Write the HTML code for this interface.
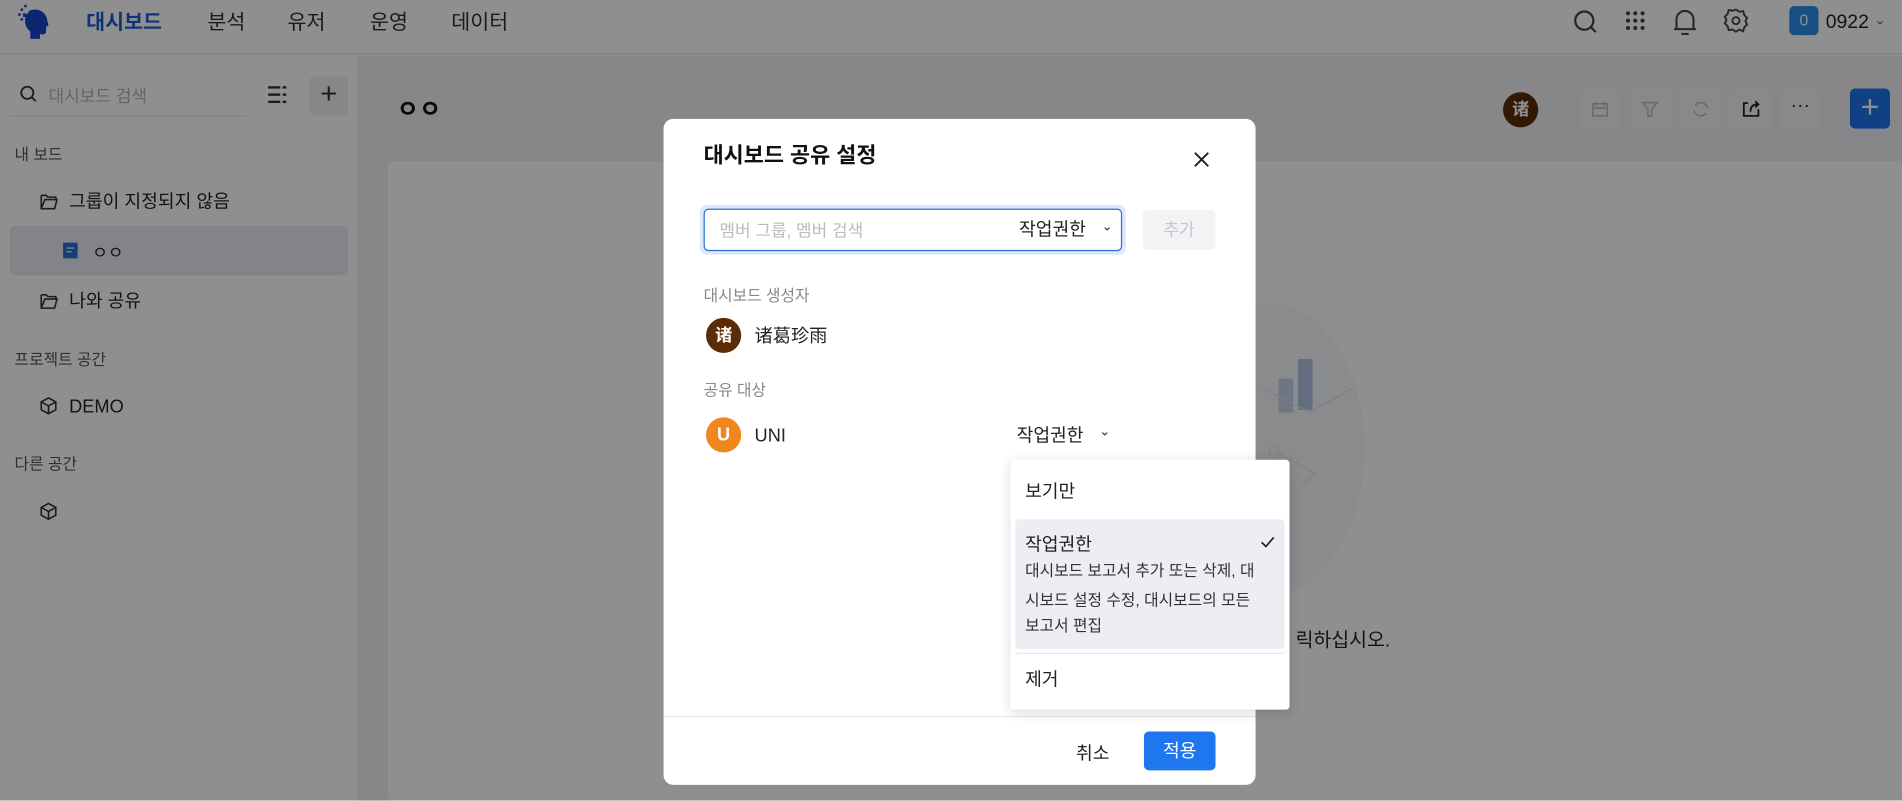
<!DOCTYPE html>
<html><head><meta charset="utf-8"><style>
*{box-sizing:border-box;margin:0;padding:0}
html,body{width:1902px;height:801px;overflow:hidden;background:#fff}
body{font-family:"Liberation Sans","Noto Sans CJK KR",sans-serif;color:#222}
#w{position:absolute;left:0;top:0;width:1568px;height:660px;transform:scale(1.2131);transform-origin:0 0;overflow:hidden}
.a{position:absolute}
.t{position:absolute;white-space:nowrap;line-height:1;margin-top:2px}
.btn{position:absolute;top:73px;width:34px;height:34px;background:#f3f4f6;border-radius:4px}
</style></head><body><div id="w">
<div class="a" style="left:0;top:0;width:1568px;height:45px;background:#fff;border-bottom:1px solid #e5e6ea"></div>
<svg class="a" style="left:14px;top:3px" width="28" height="30" viewBox="0 0 28 30"><path d="M10 6c6-3 14 0 15 8l1 4-2 1v4c0 2-2 3-5 2v4H11v-6c-4-3-5-8-4-12z" fill="#1746c8"/><g fill="#1746c8"><rect x="3" y="4" width="2" height="2"/><rect x="6" y="1" width="2" height="2"/><rect x="1" y="8" width="2" height="2"/><rect x="5" y="8" width="3" height="3"/><rect x="3" y="12" width="2" height="2"/></g></svg>
<div class="t" style="left:71px;top:8px;font-size:17px;color:#1d5fd1;font-weight:bold">대시보드</div>
<div class="t" style="left:171px;top:8px;font-size:17px;color:#333">분석</div>
<div class="t" style="left:237px;top:8px;font-size:17px;color:#333">유저</div>
<div class="t" style="left:305px;top:8px;font-size:17px;color:#333">운영</div>
<div class="t" style="left:372px;top:8px;font-size:17px;color:#333">데이터</div>
<svg class="a" style="left:1296px;top:7px" width="22" height="22" viewBox="0 0 22 22" fill="none" stroke="#444" stroke-width="1.8"><circle cx="10" cy="10" r="7.5"/><path d="M15.5 15.5l4 4"/></svg>
<svg class="a" style="left:1339px;top:8px" width="18" height="18" viewBox="0 0 18 18" fill="#444"><circle cx="3" cy="3" r="1.7"/><circle cx="9" cy="3" r="1.7"/><circle cx="15" cy="3" r="1.7"/><circle cx="3" cy="9" r="1.7"/><circle cx="9" cy="9" r="1.7"/><circle cx="15" cy="9" r="1.7"/><circle cx="3" cy="15" r="1.7"/><circle cx="9" cy="15" r="1.7"/><circle cx="15" cy="15" r="1.7"/></svg>
<svg class="a" style="left:1379px;top:6px" width="20" height="24" viewBox="0 0 20 24" fill="none" stroke="#444" stroke-width="1.7"><path d="M3 18V10a7 7 0 0114 0v8zM1 18h18M7 22h6"/></svg>
<svg class="a" style="left:1420px;top:6px" width="22" height="22" viewBox="0 0 24 24" fill="none" stroke="#444" stroke-width="1.7"><path d="M12 2l3 2 3.5-.5 1 3.5 2.5 2.5-1.5 3 1.5 3-2.5 2.5-1 3.5L15 20l-3 2-3-2-3.5.5-1-3.5L2 14.5l1.5-3L2 8.5 4.5 6l1-3.5L9 3z"/><circle cx="12" cy="12" r="3.2"/></svg>
<div class="a" style="left:1475px;top:5px;width:24px;height:24px;background:#2a8ee8;border-radius:4px;color:#fff;font-size:13px;text-align:center;line-height:24px">0</div>
<div class="t" style="left:1505px;top:9px;font-size:16px;color:#222">0922</div>
<div class="t" style="left:1545px;top:10px;font-size:11px;color:#666">⌄</div>
<div class="a" style="left:0;top:46px;width:295px;height:614px;background:#fff"></div>
<svg class="a" style="left:16px;top:70px" width="15" height="15" viewBox="0 0 15 15" fill="none" stroke="#333" stroke-width="1.5"><circle cx="6.5" cy="6.5" r="5"/><path d="M10 10l3.5 3.5"/></svg>
<div class="t" style="left:40px;top:70px;font-size:14px;color:#b3b3b3">대시보드 검색</div>
<div class="a" style="left:8px;top:95px;width:195px;height:1px;background:#e3e3e3"></div>
<svg class="a" style="left:221px;top:71px" width="16" height="14" viewBox="0 0 16 14" fill="#333"><rect x="0" y="0" width="10" height="2"/><rect x="12" y="0" width="3" height="2"/><rect x="0" y="6" width="10" height="2"/><rect x="12" y="6" width="3" height="2"/><rect x="0" y="12" width="10" height="2"/><rect x="12" y="12" width="3" height="2"/></svg>
<div class="a" style="left:255px;top:63px;width:32px;height:32px;background:#eef0f3;border-radius:4px;text-align:center;line-height:30px;font-size:24px;color:#333">+</div>
<div class="t" style="left:12px;top:119px;font-size:13px;color:#555">내 보드</div>
<svg class="a" style="left:33px;top:159px" width="15" height="14" viewBox="0 0 15 14" fill="none" stroke="#333" stroke-width="1.3"><path d="M1 2h4l1.5 1.5H13v2M1 2v11h11l2-7.5H4L1 13"/></svg>
<div class="t" style="left:57px;top:157px;font-size:15px;color:#222">그룹이 지정되지 않음</div>
<div class="a" style="left:8px;top:186px;width:279px;height:41px;background:#e9ecf6;border-radius:5px"></div>
<div class="a" style="left:52px;top:200px;width:12px;height:13px;background:#2f6bd6;border-radius:1px"></div>
<div class="a" style="left:55px;top:204px;width:6px;height:1px;background:#fff"></div>
<div class="a" style="left:55px;top:207px;width:4px;height:1px;background:#fff"></div>
<div class="t" style="left:76px;top:199px;font-size:14px;color:#222">ㅇㅇ</div>
<svg class="a" style="left:33px;top:241px" width="15" height="14" viewBox="0 0 15 14" fill="none" stroke="#333" stroke-width="1.3"><path d="M1 2h4l1.5 1.5H13v2M1 2v11h11l2-7.5H4L1 13"/></svg>
<div class="t" style="left:57px;top:239px;font-size:15px;color:#222">나와 공유</div>
<div class="t" style="left:12px;top:288px;font-size:13px;color:#555">프로젝트 공간</div>
<svg class="a" style="left:33px;top:327px" width="14" height="15" viewBox="0 0 14 15" fill="none" stroke="#333" stroke-width="1.3"><path d="M7 1l6 3.3v6.4L7 14l-6-3.3V4.3zM1 4.3L7 7.6l6-3.3M7 7.6V14"/></svg>
<div class="t" style="left:57px;top:326px;font-size:15px;color:#222">DEMO</div>
<div class="t" style="left:12px;top:374px;font-size:13px;color:#555">다른 공간</div>
<svg class="a" style="left:33px;top:414px" width="14" height="15" viewBox="0 0 14 15" fill="none" stroke="#333" stroke-width="1.3"><path d="M7 1l6 3.3v6.4L7 14l-6-3.3V4.3zM1 4.3L7 7.6l6-3.3M7 7.6V14"/></svg>
<div class="a" style="left:295px;top:46px;width:1273px;height:614px;background:#f0f1f5"></div>
<div class="t" style="left:327px;top:79px;font-size:20px;font-weight:bold;color:#111">ㅇㅇ</div>
<div class="a" style="left:1239px;top:76px;width:29px;height:29px;border-radius:50%;background:#5c2c07;color:#fff;font-size:14px;font-weight:bold;text-align:center;line-height:29px">诸</div>
<div class="btn" style="left:1302px"></div><div class="btn" style="left:1343px"></div><div class="btn" style="left:1385px"></div><div class="btn" style="left:1426px"></div><div class="btn" style="left:1467px;text-align:center;line-height:30px;font-size:16px;color:#333">···</div>
<svg class="a" style="left:1312px;top:83px" width="14" height="14" viewBox="0 0 14 14" fill="none" stroke="#bbb" stroke-width="1.2"><rect x="1" y="2.5" width="12" height="10"/><path d="M1 6h12M4 1v3M10 1v3"/></svg>
<svg class="a" style="left:1353px;top:83px" width="14" height="14" viewBox="0 0 14 14" fill="none" stroke="#bbb" stroke-width="1.2"><path d="M1 1.5h12L8.5 7v5.5L5.5 13V7z"/></svg>
<svg class="a" style="left:1395px;top:83px" width="14" height="14" viewBox="0 0 14 14" fill="none" stroke="#bbb" stroke-width="1.2"><path d="M12.5 6A5.5 5.5 0 002.5 4M1.5 8a5.5 5.5 0 0010 2"/></svg>
<svg class="a" style="left:1436px;top:82px" width="15" height="15" viewBox="0 0 15 15" fill="none" stroke="#222" stroke-width="1.5"><path d="M5 3H1.5v10.5h12V8M7 10c0-4 2-6 6-6M11 1.5L13.5 4 11 6.5"/></svg>
<div class="a" style="left:1525px;top:73px;width:33px;height:33px;background:#1f74ee;border-radius:4px;color:#fff;text-align:center;line-height:31px;font-size:26px">+</div>
<div class="a" style="left:320px;top:133px;width:1248px;height:527px;background:#fff;border-radius:4px"></div>
<div class="a" style="left:970px;top:250px;width:155px;height:240px;border-radius:50%;background:#f6f8fb;"></div>
<svg class="a" style="left:1040px;top:290px" width="75" height="140" viewBox="0 0 75 140" fill="none"><rect x="14" y="22" width="12" height="28" fill="#c4d1ea"/><rect x="30" y="6" width="12" height="42" fill="#b2c4e6"/><path d="M0 30l40 20 35-20" stroke="#dde3ee"/><circle cx="10" cy="82" r="4" stroke="#dde3ee"/><path d="M14 84l30 16-10 10" stroke="#dde3ee"/></svg>
<div class="t" style="left:1068px;top:519px;font-size:16px;color:#222">릭하십시오.</div>
<div class="a" style="left:0;top:0;width:1568px;height:660px;background:rgba(0,0,0,0.44)"></div>
<div class="a" style="left:547px;top:98px;width:488px;height:549px;background:#fff;border-radius:8px"></div>
<div class="t" style="left:580px;top:117px;font-size:18px;font-weight:bold;color:#111">대시보드 공유 설정</div>
<svg class="a" style="left:984px;top:125px" width="13" height="13" viewBox="0 0 13 13" stroke="#222" stroke-width="1.6"><path d="M1 1l11 11M12 1L1 12"/></svg>
<div class="a" style="left:577px;top:169px;width:351px;height:41px;border-radius:6px;background:#dbe8fb"></div>
<div class="a" style="left:580px;top:172px;width:345px;height:35px;border:1px solid #2a6fd6;border-radius:4px;background:#fff"></div>
<div class="t" style="left:593px;top:181px;font-size:14px;color:#bcbcbc">멤버 그룹, 멤버 검색</div>
<div class="t" style="left:840px;top:180px;font-size:15px;color:#222">작업권한</div>
<div class="t" style="left:908px;top:180px;font-size:11px;color:#333">⌄</div>
<div class="a" style="left:942px;top:173px;width:60px;height:33px;background:#f2f3f5;border-radius:4px;color:#c2c5cc;text-align:center;line-height:33px;font-size:14px">추가</div>
<div class="t" style="left:580px;top:235px;font-size:13px;color:#888">대시보드 생성자</div>
<div class="a" style="left:582px;top:262px;width:29px;height:29px;border-radius:50%;background:#5c2c07;color:#fff;font-size:14px;font-weight:bold;text-align:center;line-height:29px">诸</div>
<div class="t" style="left:622px;top:268px;font-size:15px;color:#222">诸葛珍雨</div>
<div class="t" style="left:580px;top:313px;font-size:13px;color:#888">공유 대상</div>
<div class="a" style="left:582px;top:344px;width:29px;height:29px;border-radius:50%;background:#f0861c;color:#fff;font-size:15px;font-weight:bold;text-align:center;line-height:29px">U</div>
<div class="t" style="left:622px;top:350px;font-size:15px;color:#222">UNI</div>
<div class="t" style="left:838px;top:350px;font-size:15px;color:#222">작업권한</div>
<div class="t" style="left:906px;top:349px;font-size:11px;color:#333">⌄</div>
<div class="a" style="left:547px;top:590px;width:488px;height:1px;background:#e6e7ea"></div>
<div class="t" style="left:887px;top:612px;font-size:15px;color:#222">취소</div>
<div class="a" style="left:943px;top:603px;width:59px;height:32px;background:#1f77f0;border-radius:4px;color:#fff;text-align:center;line-height:33px;font-size:15px">적용</div>
<div class="a" style="left:833px;top:379px;width:230px;height:206px;background:#fff;border-radius:3px;box-shadow:0 2px 10px rgba(0,0,0,0.15)"></div>
<div class="t" style="left:845px;top:396px;font-size:15px;color:#222">보기만</div>
<div class="a" style="left:837px;top:428px;width:222px;height:107px;background:#eceef3;border-radius:4px"></div>
<div class="t" style="left:845px;top:440px;font-size:15px;color:#222">작업권한</div>
<svg class="a" style="left:1039px;top:442px" width="12" height="10" viewBox="0 0 12 10" fill="none" stroke="#222" stroke-width="1.4"><path d="M1 5l3.5 3.5L11 1"/></svg>
<div class="t" style="left:845px;top:462px;font-size:13px;color:#333">대시보드 보고서 추가 또는 삭제, 대</div>
<div class="t" style="left:845px;top:486px;font-size:13px;color:#333">시보드 설정 수정, 대시보드의 모든</div>
<div class="t" style="left:845px;top:507px;font-size:13px;color:#333">보고서 편집</div>
<div class="a" style="left:837px;top:538px;width:222px;height:1px;background:#e6e7ea"></div>
<div class="t" style="left:845px;top:551px;font-size:15px;color:#222">제거</div>
</div></body></html>
